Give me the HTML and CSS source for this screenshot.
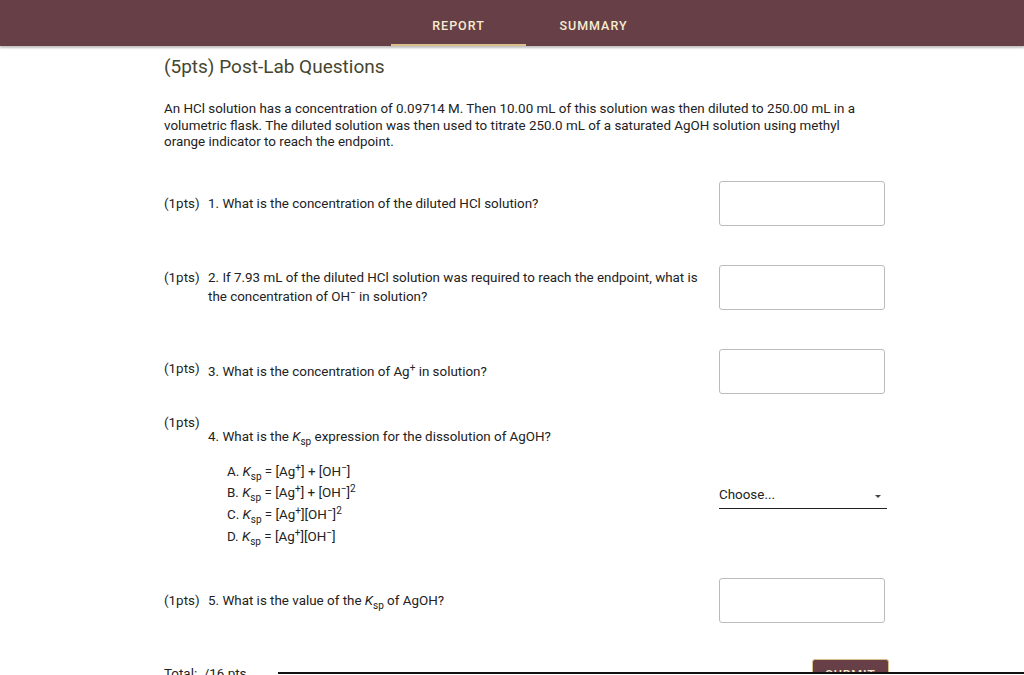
FILE: index.html
```html
<!DOCTYPE html>
<html lang="en">
<head>
<meta charset="UTF-8">
<meta name="viewport" content="width=device-width, initial-scale=1.0">
<title>Post-Lab Questions</title>
<link rel="stylesheet" href="styles.css">
</head>
<body>
    <div class="topbar">
        <div class="tabs">
            <a class="tab active" href="#">REPORT</a>
            <a class="tab" href="#">SUMMARY</a>
        </div>
    </div>

    <div class="page">
        <h2 class="title">(5pts) Post-Lab Questions</h2>
        <p class="intro">An HCl solution has a concentration of 0.09714 M. Then 10.00 mL of this solution was then diluted to 250.00 mL in a volumetric flask. The diluted solution was then used to titrate 250.0 mL of a saturated AgOH solution using methyl orange indicator to reach the endpoint.</p>

        <div class="question first">
            <div class="qbody">
                <div class="pts">(1pts)</div>
                <div class="qtext">1. What is the concentration of the diluted HCl solution?</div>
            </div>
            <div class="answer"><input type="text" class="box"></div>
        </div>

        <div class="question">
            <div class="qbody">
                <div class="pts">(1pts)</div>
                <div class="qtext">2. If 7.93 mL of the diluted HCl solution was required to reach the endpoint, what is the concentration of OH<sup>&minus;</sup> in solution?</div>
            </div>
            <div class="answer"><input type="text" class="box"></div>
        </div>

        <div class="question">
            <div class="qbody">
                <div class="pts up">(1pts)</div>
                <div class="qtext">3. What is the concentration of Ag<sup>+</sup> in solution?</div>
            </div>
            <div class="answer"><input type="text" class="box"></div>
        </div>

        <div class="question q4">
            <div class="qbody">
                <div class="pts">(1pts)</div>
                <div class="qtext">
                    <div class="q4-title">4. What is the <i>K</i><sub>sp</sub> expression for the dissolution of AgOH?</div>
                    <ol class="choices">
                        <li>A. <i>K</i><sub>sp</sub> = [Ag<sup>+</sup>] + [OH<sup>&minus;</sup>]</li>
                        <li>B. <i>K</i><sub>sp</sub> = [Ag<sup>+</sup>] + [OH<sup>&minus;</sup>]<sup>2</sup></li>
                        <li>C. <i>K</i><sub>sp</sub> = [Ag<sup>+</sup>][OH<sup>&minus;</sup>]<sup>2</sup></li>
                        <li>D. <i>K</i><sub>sp</sub> = [Ag<sup>+</sup>][OH<sup>&minus;</sup>]</li>
                    </ol>
                </div>
            </div>
            <div class="answer">
                <div class="select">
                    <span>Choose...</span>
                    <span class="caret"></span>
                </div>
            </div>
        </div>

        <div class="question last">
            <div class="qbody">
                <div class="pts">(1pts)</div>
                <div class="qtext">5. What is the value of the <i>K</i><sub>sp</sub> of AgOH?</div>
            </div>
            <div class="answer"><input type="text" class="box"></div>
        </div>

        <div class="footer">
            <span class="total">Total: &nbsp;/16 pts</span>
            <button class="submit">SUBMIT</button>
        </div>
    </div>
</body>
</html>
```

FILE: styles.css
```css
body {
    margin: 0;
    font-family: Roboto, "Liberation Sans", Arial, sans-serif;
    color: #222;
    background: #fff;
    overflow: hidden;
}
.topbar {
    background-color: #673f47;
    height: 46px;
    box-shadow: 0 2px 2px rgba(0, 0, 0, 0.25);
}
.tabs {
    display: flex;
    justify-content: center;
    height: 46px;
    padding-left: 28px;
}
.tab {
    width: 135px;
    box-sizing: border-box;
    display: flex;
    align-items: center;
    justify-content: center;
    color: #f6eccf;
    text-decoration: none;
    font-size: 12.5px;
    font-weight: 500;
    letter-spacing: 1px;
    padding-top: 4px;
}
.tab.active {
    border-bottom: 2px solid #d9c08a;
    padding-top: 6px;
}
.page {
    width: 724px;
    margin-left: 164px;
}
.title {
    font-size: 19px;
    font-weight: 400;
    color: #46452f;
    margin: 9px 0 0;
    line-height: 24px;
}
.intro {
    font-size: 13.4px;
    line-height: 16.5px;
    margin: 22px 0 0;
    width: 700px;
}
.question {
    display: flex;
    align-items: center;
    font-size: 13.4px;
    line-height: 19px;
    margin-top: 39px;
}
.question.first {
    margin-top: 30px;
}
.question.last {
    margin-top: 31px;
}
.qbody {
    display: flex;
    align-items: flex-start;
}
.pts {
    width: 44px;
    flex: none;
}
.pts.up {
    position: relative;
    top: -3px;
}
.qtext {
    width: 505px;
    flex: none;
}
.answer {
    margin-left: 6px;
    flex: none;
}
.box {
    display: block;
    width: 166px;
    height: 45px;
    box-sizing: border-box;
    border: 1px solid #bbb;
    border-radius: 3px;
    background: #fff;
}
sup, sub {
    font-size: 10px;
    line-height: 0;
}
.q4 {
    align-items: flex-start;
    margin-top: 19px;
}
.q4-title {
    margin-top: 14px;
}
.choices {
    list-style: none;
    margin: 15px 0 0;
    padding-left: 19px;
}
.choices li {
    line-height: 21.7px;
}
.q4 .answer {
    margin-top: 72px;
}
.select {
    width: 168px;
    display: flex;
    justify-content: space-between;
    align-items: center;
    border-bottom: 1px solid #222;
    padding-bottom: 4px;
    font-size: 13.4px;
}
.caret {
    width: 0;
    height: 0;
    border-left: 3.5px solid transparent;
    border-right: 3.5px solid transparent;
    border-top: 3.5px solid #444;
    margin-right: 6px;
    margin-top: 4px;
}
.footer {
    position: relative;
    display: flex;
    justify-content: space-between;
    align-items: flex-start;
    margin-top: 36px;
    font-size: 13.4px;
}
.footer::after {
    content: "";
    position: absolute;
    left: 114px;
    right: -136px;
    top: 13px;
    height: 20px;
    border-top: 2px solid #111;
    background: #fff;
}
.total {
    padding-top: 7px;
}
.submit {
    background-color: #673f47;
    color: #f6eccf;
    border: 1px solid #d9c08a;
    border-radius: 3px;
    font-family: inherit;
    font-size: 12.5px;
    font-weight: 500;
    letter-spacing: 0.8px;
    width: 77px;
    height: 32px;
    margin-right: -1px;
    padding-bottom: 2px;
}
```
